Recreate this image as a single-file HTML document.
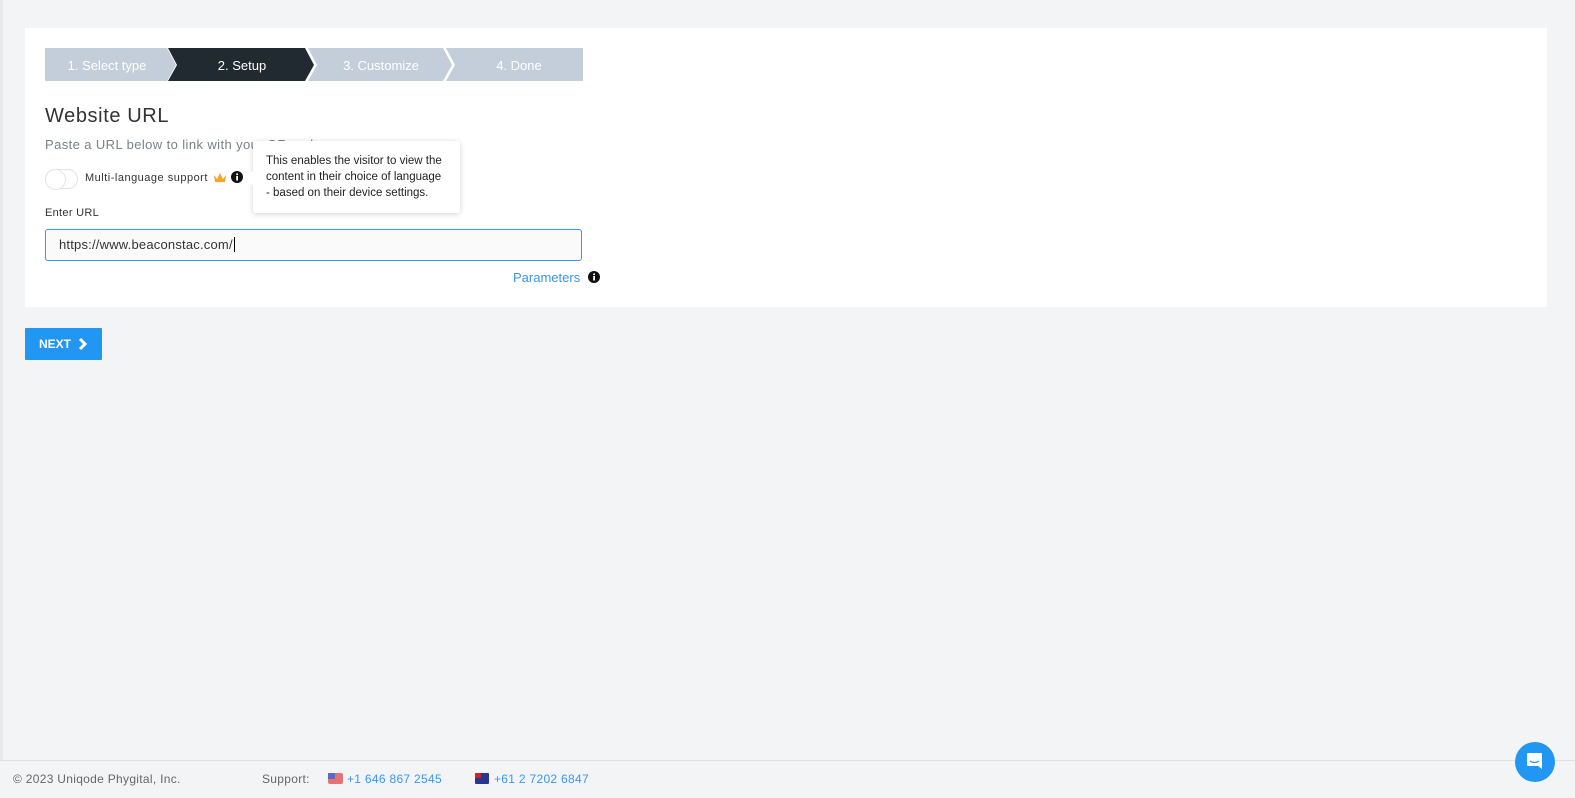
<!DOCTYPE html>
<html><head><meta charset="utf-8"><style>
body{margin:0;width:1575px;height:798px;background:#f3f4f6;font-family:"Liberation Sans",sans-serif;position:relative;overflow:hidden}
.card{position:absolute;left:25px;top:28px;width:1522px;height:279px;background:#fff}
.abs{position:absolute}
</style></head><body>
<div class="abs" style="left:0;top:0;width:3px;height:760px;background:#e8eaee"></div>
<div class="card"></div>
<svg class="abs" style="left:45px;top:48px" width="540" height="34">
<polygon points="0,0 122,0 131,17 122,33 0,33" fill="#c3ceda"/>
<polygon points="123,0 260,0 269,17 260,33 123,33 132,17" fill="#222a31"/>
<polygon points="263,0 398,0 407,17 398,33 263,33 272,17" fill="#c3ceda"/>
<polygon points="401,0 538,0 538,33 401,33 410,17" fill="#c3ceda"/>
<text x="62" y="22" fill="#fff" font-size="13" text-anchor="middle" font-family="Liberation Sans">1. Select type</text>
<text x="197" y="22" fill="#fff" font-size="13" text-anchor="middle" font-family="Liberation Sans">2. Setup</text>
<text x="336" y="22" fill="#fff" font-size="13" text-anchor="middle" font-family="Liberation Sans">3. Customize</text>
<text x="474" y="22" fill="#fff" font-size="13" text-anchor="middle" font-family="Liberation Sans">4. Done</text>
</svg>
<div class="abs" style="left:45px;top:105px;font-size:20px;color:#333;letter-spacing:0.6px">Website URL</div>
<div class="abs" style="left:45px;top:137px;font-size:13px;color:#7a8088;letter-spacing:0.4px">Paste a URL below to link with your QR code</div>
<div class="abs" style="left:45px;top:169px;width:31px;height:18px;border:1px solid #dfe2e6;border-radius:10px;background:#fff"></div>
<div class="abs" style="left:45px;top:169px;width:19px;height:19px;border:1px solid #e2e4e8;border-radius:50%;background:#fff"></div>
<div class="abs" style="left:85px;top:172px;font-size:11px;color:#333;letter-spacing:0.5px">Multi-language support</div>
<svg class="abs" style="left:213px;top:172px" width="14" height="12"><path d="M1,3 L4,7 L7,1 L10,7 L13,3 L12,10 L2,10Z" fill="#f5a623"/></svg>
<svg class="abs" style="left:231px;top:171px" width="12" height="12"><circle cx="6" cy="6" r="6" fill="#111"/><rect x="5.2" y="5" width="1.8" height="4.5" fill="#fff"/><circle cx="6.1" cy="3.2" r="1" fill="#fff"/></svg>
<div class="abs" style="left:253px;top:141px;width:207px;height:72px;background:#fff;border-radius:3px;box-shadow:0 1px 6px rgba(0,0,0,.18)"></div>
<div class="abs" style="left:247px;top:173px;width:10px;height:10px;background:#fff;transform:rotate(45deg)"></div>
<div class="abs" style="left:266px;top:153px;font-size:11.5px;line-height:16px;color:#222">This enables the visitor to view the<br>content in their choice of language<br>- based on their device settings.</div>
<div class="abs" style="left:45px;top:207px;font-size:11px;color:#333;letter-spacing:0.3px">Enter URL</div>
<div class="abs" style="left:45px;top:229px;width:535px;height:30px;border:1px solid #3896f5;border-radius:3px;background:#fafafa"></div>
<div class="abs" style="left:59px;top:237px;font-size:13px;color:#333;letter-spacing:0.2px">https://www.beaconstac.com/<span style="border-left:1px solid #000;margin-left:1px"></span></div>
<div class="abs" style="left:513px;top:270px;font-size:13px;color:#3896f5">Parameters</div>
<svg class="abs" style="left:588px;top:271px" width="12" height="12"><circle cx="6" cy="6" r="6" fill="#111"/><rect x="5.2" y="5" width="1.8" height="4.5" fill="#fff"/><circle cx="6.1" cy="3.2" r="1" fill="#fff"/></svg>
<div class="abs" style="left:25px;top:328px;width:77px;height:32px;background:#2196f3;border-radius:1px"></div>
<div class="abs" style="left:39px;top:337px;font-size:12px;font-weight:bold;color:#fff">NEXT</div>
<svg class="abs" style="left:77px;top:337px" width="12" height="14"><path d="M3,2 L8,7 L3,12" stroke="#fff" stroke-width="3" fill="none"/></svg>
<div class="abs" style="left:0;top:760px;width:1575px;height:1px;background:#dde1e6"></div>
<div class="abs" style="left:13px;top:772px;font-size:12px;color:#666;letter-spacing:0.3px">© 2023 Uniqode Phygital, Inc.</div>
<div class="abs" style="left:262px;top:772px;font-size:12px;color:#666;letter-spacing:0.3px">Support:</div>
<div class="abs" style="left:328px;top:773px;width:15px;height:11px;background:#e57373;border-radius:2px"><div style="width:7px;height:6px;background:#5c6bc0"></div></div>
<div class="abs" style="left:347px;top:772px;font-size:12px;color:#3896f5;letter-spacing:0.3px">+1 646 867 2545</div>
<div class="abs" style="left:475px;top:773px;width:14px;height:11px;background:#283593;border-radius:1px"><div style="width:6px;height:5px;background:#c62828"></div></div>
<div class="abs" style="left:494px;top:772px;font-size:12px;color:#3896f5;letter-spacing:0.3px">+61 2 7202 6847</div>
<div class="abs" style="left:1515px;top:742px;width:40px;height:40px;border-radius:50%;background:#2196f3"></div>
<svg class="abs" style="left:1526px;top:752px" width="18" height="20"><path d="M2,1 H15 Q16,1 16,2 V17 L12,14 H2 Q1,14 1,13 V2 Q1,1 2,1Z" fill="#fff"/><path d="M4,9 Q8.5,12 13,9" stroke="#2196f3" stroke-width="1.3" fill="none"/></svg>
</body></html>
